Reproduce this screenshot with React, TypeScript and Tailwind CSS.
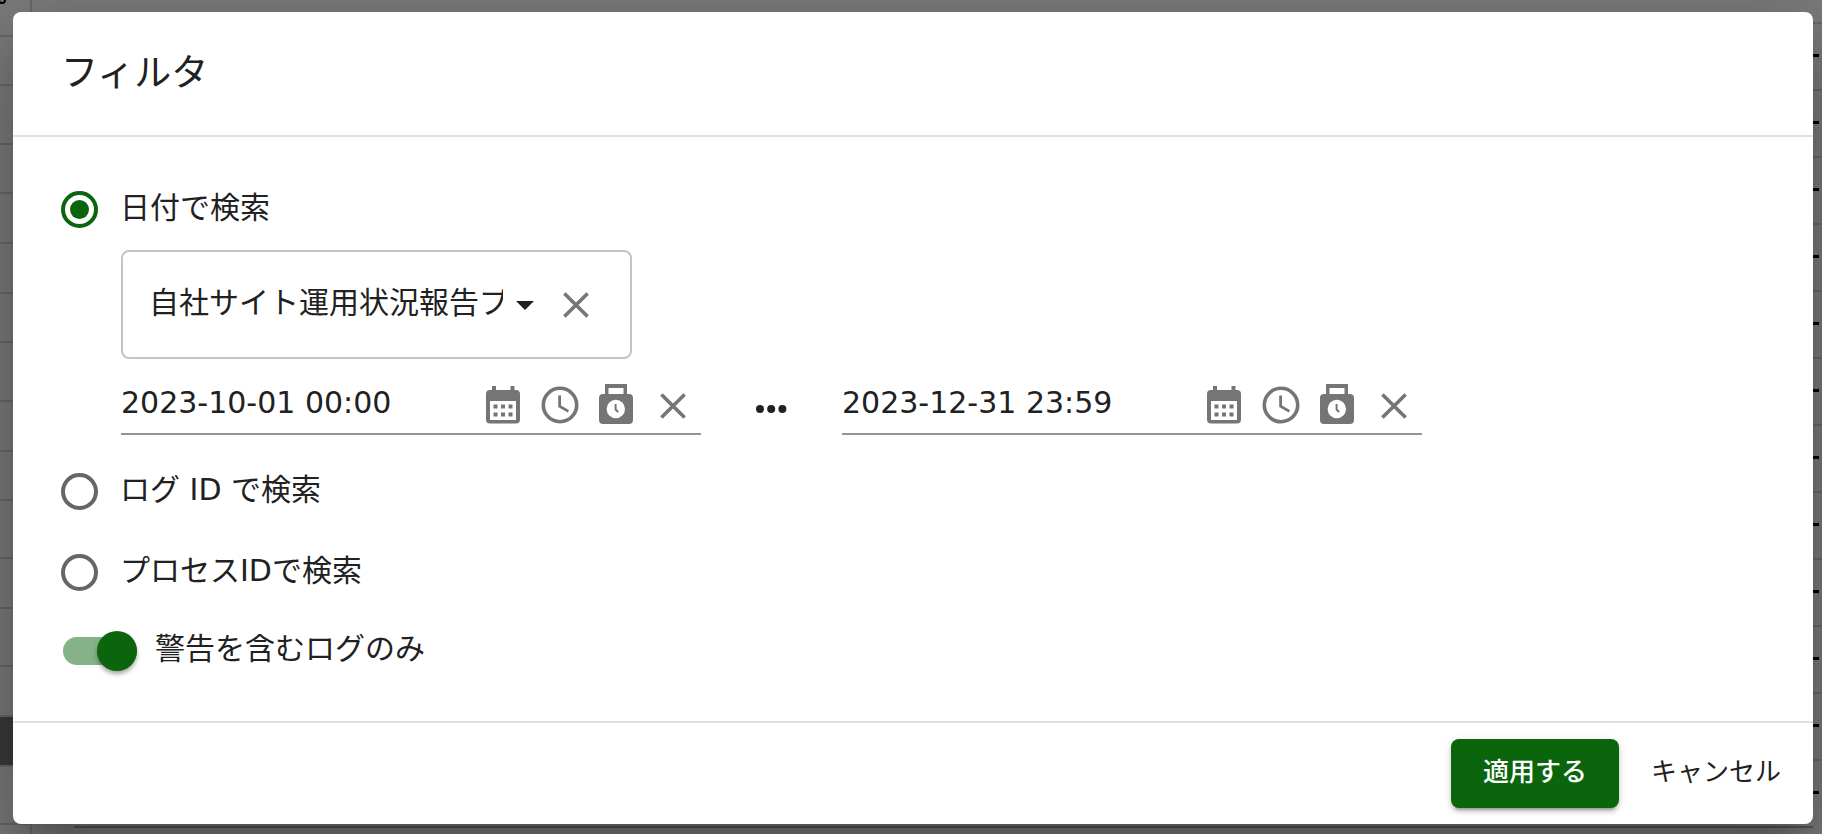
import { useState } from "react";

type Mode = "date" | "log" | "process";

const LEFT_ROWS = [
  "h-[37px]", "h-[49px]", "h-[59px]", "h-[49px]", "h-[50px]", "h-[50px]", "h-[49px]", "h-[59px]",
  "h-[50px]", "h-[49px]", "h-[58px]", "h-[50px]", "h-[58px]", "h-[50px]",
];

const RIGHT_ROWS = Array.from({ length: 12 }, (_, i) => i);

function CloseIcon() {
  return (
    <svg viewBox="0 0 26 26" className="size-[26px]" fill="none" stroke="#757575" strokeWidth="3.600">
      <path d="M1.400 1.400 24.600 24.600M24.600 1.400 1.400 24.600" />
    </svg>
  );
}

function CalendarIcon() {
  return (
    <svg viewBox="0 0 34 38" className="h-[38px] w-[34px]" fill="#757575">
      <path
        fillRule="evenodd"
        d="M6 0h4v4h14.500V0h4v4H30a4 4 0 0 1 4 4v25.500a4 4 0 0 1-4 4H4a4 4 0 0 1-4-4V8a4 4 0 0 1 4-4h2zM4 15v19h26V15z"
      />
      <path d="M7.500 18.500h4v4h-4zM15 18.500h4v4h-4zM22.500 18.500h4v4h-4zM7.500 26.500h4v4h-4zM15 26.500h4v4h-4zM22.500 26.500h4v4h-4z" />
    </svg>
  );
}

function ClockIcon() {
  return (
    <svg viewBox="0 0 38 38" className="size-[38px]" fill="none" stroke="#757575">
      <circle cx="19" cy="19" r="16.700" strokeWidth="3.600" />
      <path d="M18.600 9.500v10.600l8.800 5.300" strokeWidth="2.800" />
    </svg>
  );
}

function NowIcon() {
  return (
    <svg viewBox="0 0 34 40" className="h-[40px] w-[34px]">
      <path
        fill="#757575"
        fillRule="evenodd"
        d="M6 0h22v10h2a4 4 0 0 1 4 4v22a4 4 0 0 1-4 4H4a4 4 0 0 1-4-4V14a4 4 0 0 1 4-4h2zM9.500 4v6h15V4z"
      />
      <circle cx="16.800" cy="25" r="9.200" fill="#fff" />
      <path d="M16.600 20v5.500l2.500 2.500" fill="none" stroke="#757575" strokeWidth="2" />
    </svg>
  );
}

interface RadioRowProps {
  label: string;
  checked: boolean;
  onSelect: () => void;
}

function RadioRow({ label, checked, onSelect }: RadioRowProps) {
  return (
    <label className="flex h-[81px] items-center gap-[22px]">
      <input
        type="radio"
        name="mode"
        checked={checked}
        onChange={onSelect}
        className="grid size-[37px] shrink-0 appearance-none place-content-center rounded-full border-4 border-[#666] before:size-[19px] before:rounded-full checked:border-[#0b650d] checked:before:bg-[#0b650d]"
      />
      <span className="pb-1">{label}</span>
    </label>
  );
}

interface DateFieldProps {
  label: string;
  value: string;
  onChange: (value: string) => void;
}

function DateField({ label, value, onChange }: DateFieldProps) {
  return (
    <div className="flex h-[76px] w-[580px] items-center border-b-2 border-[#949494]">
      <input
        type="text"
        aria-label={label}
        value={value}
        onChange={(e) => onChange(e.target.value)}
        className="w-0 grow pt-3.5 outline-none"
      />
      <div className="flex items-end pt-4 pr-[15px]">
        <button type="button" aria-label="カレンダー" className="mr-[21px]"><CalendarIcon /></button>
        <button type="button" aria-label="時刻" className="mr-5"><ClockIcon /></button>
        <button type="button" aria-label="現在時刻" className="mr-[27px]"><NowIcon /></button>
        <button type="button" aria-label="クリア" className="pb-[5px]" onClick={() => onChange("")}><CloseIcon /></button>
      </div>
    </div>
  );
}

// dimmed log table behind the dialog
function Backdrop() {
  return (
    <div aria-hidden="true" className="flex h-screen justify-between overflow-hidden bg-[#7a7a7a]">
      <div className="w-8 border-r-2 border-[#686868]">
        {LEFT_ROWS.map((height, i) => (
          <div key={i} className={`${height} overflow-hidden border-b-2 border-[#686868]`}>
            {i === 0 && <div className="size-2 -translate-x-0.5 -translate-y-1 rounded-full border-2 border-black" />}
          </div>
        ))}
        <div className="h-[50px] border-b-2 border-[#686868] bg-[#3b3b3b]" />
        <div className="h-[58px] border-b-2 border-[#686868]" />
      </div>
      <div className="ml-[42px] flex grow flex-col justify-end pb-1.5">
        <div className="h-0.5 bg-[#555]" />
      </div>
      <div className="w-[9px] pt-[22px]">
        {RIGHT_ROWS.map((row) => (
          <div key={row} className="h-[67px] border-t-2 border-[#686868] pt-[30px]">
            <div className="h-[3px] w-1.5 bg-black" />
          </div>
        ))}
      </div>
    </div>
  );
}

export default function App() {
  const [mode, setMode] = useState<Mode>("date");
  const [app, setApp] = useState("report");
  const [from, setFrom] = useState("2023-10-01 00:00");
  const [to, setTo] = useState("2023-12-31 23:59");
  const [warningsOnly, setWarningsOnly] = useState(true);

  return (
    <div className="relative font-['DejaVu_Sans','Noto_Sans_CJK_JP',sans-serif] text-[30px] leading-10 text-[#212121]">
      <Backdrop />
      <div className="absolute inset-0 pt-3 pr-[9px] pb-2.5 pl-[13px]">
        <form
          role="dialog"
          aria-labelledby="filter-title"
          onSubmit={(e) => e.preventDefault()}
          className="flex flex-col rounded-lg bg-white shadow-[0_22px_30px_-14px_rgba(0,0,0,0.2),0_48px_76px_6px_rgba(0,0,0,0.14),0_18px_92px_16px_rgba(0,0,0,0.12)]"
        >
          <header className="flex h-[125px] items-center border-b-2 border-[#e0e0e0] px-12">
            <h2 id="filter-title" className="text-[37px]">フィルタ</h2>
          </header>

          <div className="px-12 py-8">
            <RadioRow label="日付で検索" checked={mode === "date"} onSelect={() => setMode("date")} />
            <div className="pl-[60px]">
              <div className="flex h-[109px] w-[511px] items-center rounded-lg border-2 border-[#c4c4c4] pl-[26px]">
                <select
                  aria-label="アプリ"
                  value={app}
                  onChange={(e) => setApp(e.target.value)}
                  className="w-[354px] appearance-none overflow-hidden pb-1 outline-none"
                >
                  <option value="report">自社サイト運用状況報告プ</option>
                  <option value="">-</option>
                </select>
                <svg viewBox="0 0 18 9" className="mt-0.5 ml-[13px] h-[9px] w-[18px]" fill="#212121">
                  <path d="M0 0h18L9 9z" />
                </svg>
                <button type="button" aria-label="クリア" className="ml-[29px]" onClick={() => setApp("")}>
                  <CloseIcon />
                </button>
              </div>
              <div className="flex items-center">
                <DateField label="開始日時" value={from} onChange={setFrom} />
                <div className="flex w-[141px] justify-center pt-6">
                  <svg viewBox="0 0 32 8" className="h-2 w-8" fill="#212121">
                    <circle cx="4" cy="4" r="4" />
                    <circle cx="15.200" cy="4" r="4" />
                    <circle cx="26.400" cy="4" r="4" />
                  </svg>
                </div>
                <DateField label="終了日時" value={to} onChange={setTo} />
              </div>
            </div>
            <div className="pt-4">
              <RadioRow label="ログ ID で検索" checked={mode === "log"} onSelect={() => setMode("log")} />
              <RadioRow label="プロセスIDで検索" checked={mode === "process"} onSelect={() => setMode("process")} />
            </div>
            <label className="flex h-[76px] items-center gap-[18px] pl-0.5">
              <input
                type="checkbox"
                role="switch"
                checked={warningsOnly}
                onChange={(e) => setWarningsOnly(e.target.checked)}
                className="flex h-7 w-[74px] shrink-0 appearance-none items-center rounded-full bg-[#9e9e9e] before:size-10 before:shrink-0 before:rounded-full before:bg-white before:shadow-[0_3px_4px_rgba(0,0,0,0.35)] checked:justify-end checked:bg-[#85b286] checked:before:bg-[#0b650d]"
              />
              <span className="pb-1">警告を含むログのみ</span>
            </label>
          </div>

          <footer className="flex h-[103px] items-center justify-end border-t-2 border-[#e0e0e0] text-[26px]">
            <button
              type="submit"
              className="h-[69px] rounded-lg bg-[#0b650d] px-8 pb-1 font-medium text-white shadow-[0_6px_2px_-4px_rgba(0,0,0,0.2),0_4px_4px_rgba(0,0,0,0.14),0_2px_10px_rgba(0,0,0,0.12)]"
            >
              適用する
            </button>
            <button type="button" className="h-[69px] px-8 pb-1">キャンセル</button>
          </footer>
        </form>
      </div>
    </div>
  );
}
